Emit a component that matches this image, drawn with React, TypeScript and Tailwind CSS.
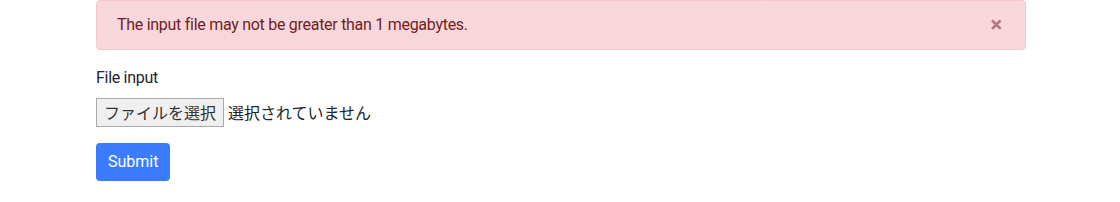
import React from 'react';

export default function App() {
  return (
    <div className="min-h-screen bg-white font-['Roboto','Noto_Sans_CJK_JP',sans-serif] text-base leading-6 text-[#212529]">
      <div className="mx-auto w-[960px] pl-4 pr-[14px]">
        {/* alert */}
        <div className="relative mb-4 rounded border border-[#f5c6cb] bg-[#f8d7da] py-3 pl-5 pr-16 tracking-[-0.28px] text-[#721c24]">
          The input file may not be greater than 1 megabytes.
          <button className="absolute right-0 top-0 py-3 pl-5 pr-[23px] text-[22px] font-bold leading-6 text-[#b07683]">
            ×
          </button>
        </div>

        {/* file input */}
        <div className="mb-4">
          <label className="mb-2 block tracking-[-0.3px]">File input</label>
          <div className="flex items-center font-['Noto_Sans_CJK_JP',sans-serif]">
            <span className="h-[29px] border border-[#a9a9a9] bg-[#efefef] px-[7px] text-base leading-[27px] text-[#333]">
              ファイルを選択
            </span>
            <span className="ml-1 leading-[29px]">選択されていません</span>
          </div>
        </div>

        <button className="h-[38px] rounded bg-[#3b7cff] px-3 text-white">Submit</button>
      </div>
    </div>
  );
}
